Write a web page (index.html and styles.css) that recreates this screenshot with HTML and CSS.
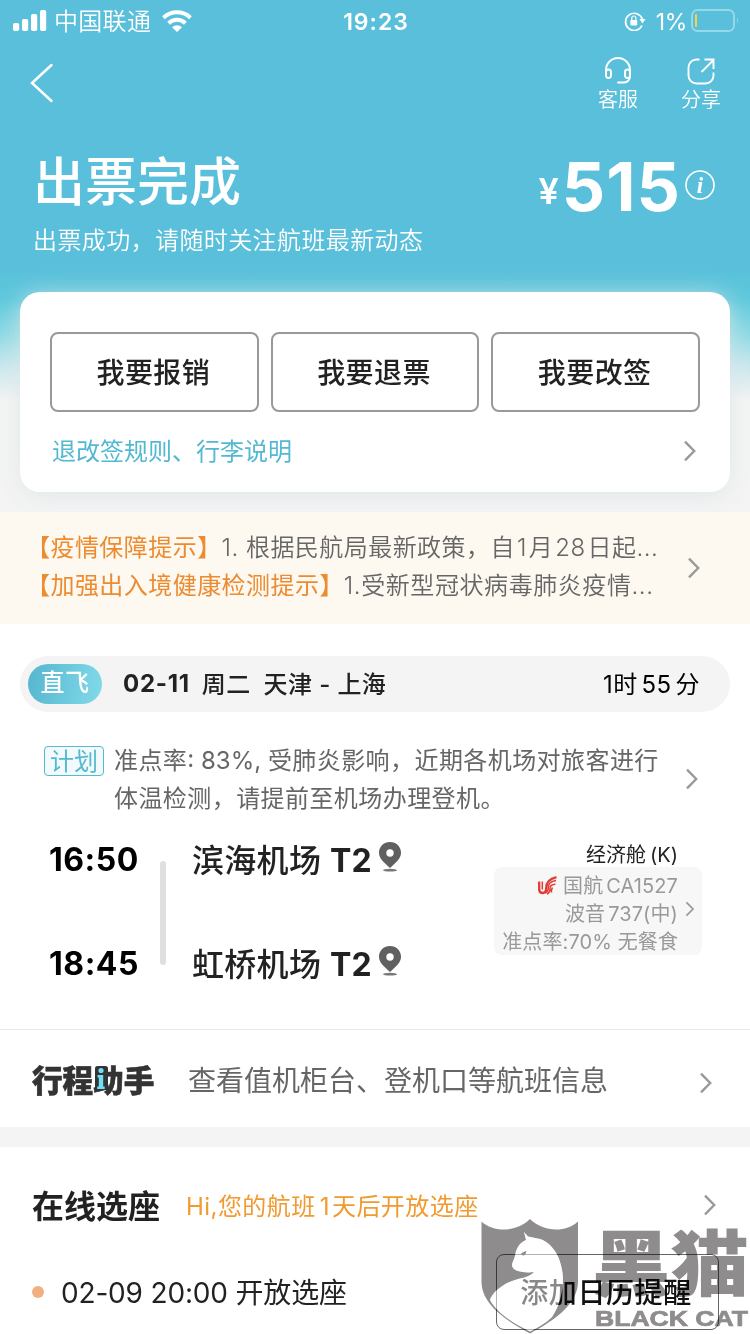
FILE: index.html
```html
<!DOCTYPE html>
<html lang="zh-CN">
<head>
<meta charset="utf-8">
<title>出票完成</title>
<link rel="stylesheet" href="styles.css">
</head>
<body>
<svg class="defs" width="0" height="0">
  <symbol id="chev" viewBox="0 0 14 22"><path d="M2 1.6 11.2 11 2 20.4" fill="none" stroke="#999" stroke-width="2.4"/></symbol>
  <symbol id="pin" viewBox="0 0 24 32"><path d="M12 1C5.700 1 1 5.700 1 11.700c0 6 5 9.300 11 15.300 6-6 11-9.300 11-15.300C23 5.700 18.300 1 12 1z" fill="#606060"/><circle cx="12" cy="12" r="3.700" fill="#fff"/><ellipse cx="12" cy="29.200" rx="7" ry="1.400" fill="#777"/></symbol>
</svg>
<div class="screen">
  <header class="hero">
    <div class="status">
      <div class="status-left">
        <svg width="34" height="22" viewBox="0 0 34 22" fill="#fff"><rect x="0" y="13" width="6.200" height="8" rx="1.800"/><rect x="9" y="9" width="6.200" height="12" rx="1.800"/><rect x="18" y="4" width="6.200" height="17" rx="1.800"/><rect x="27" y="0" width="6.200" height="21" rx="1.800"/></svg>
        <span class="carrier">中国联通</span>
        <svg width="30" height="22" viewBox="0 0 30 22"><path d="M1.500 7.700a19.500 19.500 0 0 1 27 0M6.600 13.200a12 12 0 0 1 16.800 0" fill="none" stroke="#fff" stroke-width="4"/><path d="M10 17.300a7.400 7.400 0 0 1 10 0L15 22z" fill="#fff"/></svg>
      </div>
      <div class="clock">19:23</div>
      <div class="status-right">
        <svg width="22" height="20" viewBox="0 0 22 20"><path d="M18 14.500A8.600 8.600 0 1 1 18.300 8" fill="none" stroke="#fff" stroke-width="1.700"/><path d="M15.500 8h6l-3 4.600z" fill="#fff"/><rect x="6.400" y="9" width="6.800" height="5.400" rx=".8" fill="#fff"/><path d="M7.800 9V7a2 2 0 0 1 4 0v2" fill="none" stroke="#fff" stroke-width="1.200"/></svg>
        <span class="percent">1%</span>
        <svg width="48" height="24" viewBox="0 0 48 24"><rect x="1" y="1" width="42" height="21" rx="5.500" fill="none" stroke="#95d8e8" stroke-width="2"/><rect x="4" y="5" width="2" height="13" rx="1" fill="#f6d34b"/><path d="M46 8.500q2 3 0 6z" fill="#95d8e8"/></svg>
      </div>
    </div>
    <nav class="nav">
      <svg class="back" width="24" height="40" viewBox="0 0 24 40"><path d="M21.500 2 2 20l19.500 18" fill="none" stroke="#fff" stroke-width="2.500" stroke-linecap="round"/></svg>
      <div class="actions">
        <div class="action">
          <svg width="28" height="28" viewBox="0 0 28 28" fill="none" stroke="#fff" stroke-width="1.900" stroke-linecap="round"><path d="M2 17v-4a12 12 0 0 1 24 0v6.500a6 6 0 0 1-6 6h-6"/><rect x="2" y="12.500" width="5" height="8.500" rx="2.500"/><rect x="21" y="12.500" width="5" height="8.500" rx="2.500"/></svg>
          <span>客服</span>
        </div>
        <div class="action">
          <svg width="28" height="28" viewBox="0 0 28 28" fill="none" stroke="#fff" stroke-width="1.900"><path d="M12.500 2.500H9.500a8 8 0 0 0-8 8v8a8 8 0 0 0 8 8h9a8 8 0 0 0 8-8v-3"/><path d="M14.500 15 26 3.500M17.500 2.500h9V12"/></svg>
          <span>分享</span>
        </div>
      </div>
    </nav>
    <div class="headline">
      <h1>出票完成</h1>
      <div class="price"><span class="yen">¥</span><span class="amount">515</span>
        <svg width="30" height="30" viewBox="0 0 30 30"><circle cx="15" cy="15" r="14" fill="none" stroke="#fff" stroke-width="1.600"/><text x="15" y="22.800" text-anchor="middle" class="info-i">i</text></svg>
      </div>
    </div>
    <p class="sub">出票成功，请随时关注航班最新动态</p>
  </header>

  <main>
    <div class="card-area">
      <section class="card">
        <div class="buttons"><button>我要报销</button><button>我要退票</button><button>我要改签</button></div>
        <div class="rules"><span>退改签规则、行李说明</span><svg class="chev"><use href="#chev"/></svg></div>
      </section>
    </div>

    <section class="notice">
      <div>
        <p><b>【疫情保障提示】</b>1. 根据民航局最新政策，自<i>1</i>月<i>28</i>日起...</p>
        <p class="second"><b>【加强出入境健康检测提示】</b>1.受新型冠状病毒肺炎疫情...</p>
      </div>
      <svg class="chev"><use href="#chev"/></svg>
    </section>

    <section class="flight">
      <div class="route"><span class="direct">直飞</span><span class="date">02-11</span><span class="week">周二</span><span class="cities">天津 - 上海</span><span class="duration">1时<i>55</i>分</span></div>
      <div class="plan"><span class="tag">计划</span><p>准点率<i>: 83%, </i>受肺炎影响，近期各机场对旅客进行<br>体温检测，请提前至机场办理登机。</p><svg class="chev"><use href="#chev"/></svg></div>
      <div class="trip">
        <div class="times"><span>16:50</span><span>18:45</span></div>
        <div class="bar"></div>
        <div class="ports">
          <div><span>滨海机场 <b>T2</b></span><svg class="pin"><use href="#pin"/></svg></div>
          <div><span>虹桥机场 <b>T2</b></span><svg class="pin"><use href="#pin"/></svg></div>
        </div>
        <div class="plane">
          <div class="cabin">经济舱<i>(K)</i></div>
          <div class="craft">
            <div class="lines">
              <div><svg width="19" height="19" viewBox="0 0 19 19" fill="none" stroke="#e23b35"><path d="M1.200 5.500v8.300q.3 3.200 3.800 3.200 3.200-.5 3.200-5 0-8.500 10.300-10.800" stroke-width="2.300"/><path d="M4.300 5.500v8" stroke-width="1.500"/><path d="M9 18.200q3.200-1.800 3-5.700 0-4 5.500-4.200M7 17q3.600-1.500 3.300-6 0-5 7.700-6.400M14.500 11.500q-1.500 2-1 5" stroke-width="1.500"/></svg><span>国航<i>CA1527</i></span></div>
              <div><span>波音<i>737(</i>中)</span></div>
              <div><span class="rate">准点率:70% 无餐食</span></div>
            </div>
            <svg class="chev small"><use href="#chev"/></svg>
          </div>
        </div>
      </div>
    </section>

    <section class="helper">
      <div class="logo">行程助手<svg width="13" height="24" viewBox="0 0 13 24"><path d="M0 24V3q0-3 3-3h7q3 0 3 3v21z" fill="#333"/><circle cx="6" cy="4.500" r="2.600" fill="#6fe0f2"/><path d="M2.500 9h5.700v11.500h1.500V23h-7.500v-2.500h1.600v-9H2.500z" fill="#6fe0f2"/></svg></div>
      <span>查看值机柜台、登机口等航班信息</span>
      <svg class="chev"><use href="#chev"/></svg>
    </section>

    <section class="seat">
      <div class="seat-head"><h2>在线选座</h2><span>Hi,您的航班<i>1</i>天后开放选座</span><svg class="chev"><use href="#chev"/></svg></div>
      <div class="seat-row"><span class="dot"></span><span class="open">02-09 20:00 开放选座</span><button class="remind">添加日历提醒</button></div>
    </section>
  </main>

  <svg class="watermark" width="270" height="120" viewBox="480 1214 270 120">
    <g class="ink">
      <path fill-rule="evenodd" d="M481.500 1221.500c13 12 36 10 48.500-2.500 12.500 12.500 35 14.500 48 2.500v60c0 22-22 38-48 52-26-14-48.500-30-48.500-52z M524 1232l4 4.500 12 2.500c9 3 22 14 23 40 0 14-4 28-11 38-6 6-13 10-22 14.500-14-7-32-17-40-31.500 2-7 12-16 25-20 6-2 15-3 19-8-7 1-12 0-16-1-4-1-6-4-6-6 0-3 2-5 3-9 1-7 4-13 11-16z"/>
      <text x="592" y="1290" class="mark" textLength="157" lengthAdjust="spacingAndGlyphs">黑猫</text>
      <text x="595" y="1326" class="latin" textLength="153" lengthAdjust="spacingAndGlyphs">BLACK CAT</text>
    </g>
    <path class="cat" d="M524 1232l4 4.500 12 2.500c9 3 22 14 23 40 0 14-4 28-11 38-6 6-13 10-22 14.500-14-7-32-17-40-31.500 2-7 12-16 25-20 6-2 15-3 19-8-7 1-12 0-16-1-4-1-6-4-6-6 0-3 2-5 3-9 1-7 4-13 11-16z"/>
    <path d="M520.500 1254q3-2.500 6-3-1 4.500-3.500 4.500z" fill="#8e8b8c"/>
  </svg>
</div>
</body>
</html>
```
FILE: styles.css
```css
* { box-sizing: border-box; }
body { margin: 0; background: #fff; font-family: Inter, "Noto Sans CJK SC", sans-serif; color: #222; }
p, h1, h2 { margin: 0; }
i { font-style: normal; }
svg { display: block; flex: none; }
.defs { position: absolute; }
.screen { position: relative; width: 750px; height: 1334px; overflow: hidden; }
.chev { width: 14px; height: 22px; }
.chev.small { width: 10px; height: 16px; }

.hero { height: 400px; background: linear-gradient(#59bfda 0, #59bfda 265px, #5ec9dc 300px, #8ddae5 335px, #c8e8ed 365px, #f4f4f4 400px); color: #fff; }
.status { height: 40px; display: grid; grid-template-columns: 1fr 66px 1fr; align-items: center; padding: 0 11px 0 13px; }
.status-left, .status-right { display: flex; align-items: center; }
.carrier { font-size: 24px; font-weight: 350; letter-spacing: .3px; line-height: 40px; margin: 2px 11px 0 7px; }
.clock { font-size: 23px; font-weight: 600; letter-spacing: 1px; text-align: center; white-space: nowrap; padding-top: 1px; }
.status-right { justify-content: flex-end; }
.percent { font-size: 23px; letter-spacing: -.4px; margin: 1px 4px 0 10px; }
.nav { height: 88px; display: flex; justify-content: space-between; padding: 16px 29px 0 30px; }
.back { margin-top: 7px; }
.actions { display: flex; gap: 43px; margin-top: 1px; }
.action { width: 40px; display: flex; flex-direction: column; align-items: center; font-size: 20px; font-weight: 350; line-height: 30px; }
.headline { display: flex; justify-content: space-between; height: 90px; padding: 12px 35px 0 33px; }
h1 { font-size: 52px; font-weight: 500; line-height: 86px; }
.price { display: flex; align-items: baseline; font-weight: 700; }
.yen { font-size: 36px; font-weight: 600; margin: 0 3px 7px 0; transform: translateY(-7px); }
.amount { font-size: 68px; line-height: 92px; letter-spacing: 1px; }
.price svg { align-self: flex-start; margin: 30px 0 0 4px; }
.info-i { font: italic 700 23px "Liberation Serif", serif; fill: #fff; }
.sub { font-size: 24px; font-weight: 350; letter-spacing: .4px; line-height: 36px; padding: 5px 33px 0; }

.card-area { height: 112px; background: #f4f4f4; }
.card { position: relative; top: -108px; height: 200px; margin: 0 20px; background: #fff; border-radius: 20px; box-shadow: 0 4px 24px rgba(222, 229, 232, .85); padding: 40px 30px 0; }
.buttons { display: grid; grid-template-columns: repeat(3, 1fr); gap: 12px; }
button { font: 500 28px/1 Inter, "Noto Sans CJK SC", sans-serif; letter-spacing: .4px; color: #222; background: none; border: 2px solid #999; border-radius: 8px; height: 80px; padding: 2px 2px 0 0; }
.rules { display: flex; align-items: center; justify-content: space-between; height: 78px; padding: 0 3px 0 2px; font-size: 24px; font-weight: 400; color: #53b9d1; }
.rules span { margin-top: -3px; }

.notice { position: relative; display: flex; align-items: center; justify-content: space-between; height: 112px; background: #fdf8f0; padding: 0 49px 2px 26px; font-size: 24px; font-weight: 350; line-height: 38px; letter-spacing: .45px; color: #666; white-space: nowrap; }
.notice b { font-weight: 400; color: #ed8b30; }
.notice i { margin: 0 2px; }
.notice .chev { margin-top: 2px; }
.notice .second { letter-spacing: .57px; }
.second b { letter-spacing: .45px; }

.flight { height: 406px; padding: 32px 20px 0; border-bottom: 1px solid #eaeaea; }
.route { display: flex; align-items: center; height: 56px; border-radius: 28px; background: #f4f4f4; padding: 0 30px 0 8px; font-size: 24px; font-weight: 500; letter-spacing: .4px; white-space: nowrap; }
.direct { width: 74px; height: 40px; border-radius: 20px; background: linear-gradient(100deg, #54b6cf, #82dae9); color: #fff; line-height: 38px; text-align: center; }
.date { font-weight: 700; margin: -1px 0 0 21px; letter-spacing: .7px; }
.week { margin: -4px 0 0 12px; }
.cities { margin: -4px 0 0 13px; }
.duration { margin: -4px 0 0 auto; color: #000; font-weight: 400; }
.duration i { margin: 0 4px; }
.plan { display: flex; align-items: flex-start; padding: 30px 31px 0 24px; height: 112px; }
.tag { width: 60px; height: 30px; margin-top: 4px; border: 1px solid #54b9d1; border-radius: 4px; background: #f3fafb; color: #54b9d1; font-size: 24px; font-weight: 400; line-height: 29px; text-align: center; }
.plan p { margin-left: 10px; font-size: 24px; font-weight: 400; line-height: 38px; letter-spacing: .43px; color: #666; white-space: nowrap; }
.plan i { letter-spacing: 0; }
.plan .chev { margin: 26px 0 0 auto; }
.trip { display: flex; padding: 12px 28px 0; }
.times { width: 91px; padding: 3px 0 0 1px; font-size: 32px; font-weight: 700; letter-spacing: .5px; color: #000; }
.times span, .ports > div { display: flex; align-items: center; height: 40px; margin: 0 0 64px; white-space: nowrap; }
.bar { width: 6px; height: 104px; margin: 25px 26px 0 21px; border-radius: 3px; background: #dfdfdf; }
.ports { padding-top: 2px; font-size: 32px; font-weight: 500; letter-spacing: .3px; }
.ports b { font-weight: 700; letter-spacing: 0; }
.pin { width: 24px; height: 32px; margin: -2px 0 0 6px; }
.plane { width: 208px; margin-left: auto; }
.cabin { height: 31px; padding: 5px 24px 0 0; font-size: 20px; line-height: 28px; text-align: right; white-space: nowrap; }
.cabin i { margin-left: 4px; }
.craft { display: flex; align-items: center; width: 208px; height: 88px; border-radius: 8px; background: #f7f7f7; color: #999; font-size: 20px; font-weight: 400; letter-spacing: .1px; white-space: nowrap; padding: 6px 7px 0 8px; }
.lines { width: 176px; }
.lines div { display: flex; align-items: center; justify-content: flex-end; gap: 6px; height: 28px; line-height: 28px; }
.lines div svg { margin-top: -1px; }
.lines i { margin-left: 3px; }
.craft .small { margin: -10px 0 0 7px; }

.helper { display: flex; align-items: center; height: 97px; padding: 0 37px 0 32px; white-space: nowrap; color: #666; font-size: 28px; font-weight: 400; }
.helper .chev, .seat-head .chev { margin-left: auto; }
.helper .chev { margin-top: 8px; }
.logo { position: relative; width: 156px; font-size: 30.600px; font-weight: 900; color: #333; -webkit-text-stroke: .6px #333; }
.logo svg { position: absolute; left: 63px; top: 9px; }
.seat { height: 207px; border-top: 20px solid #f4f4f4; padding: 28px 31px 0 32px; }
.seat-head { display: flex; align-items: center; height: 60px; white-space: nowrap; padding-right: 2px; }
h2 { font-size: 32px; font-weight: 700; width: 154px; margin-top: -2px; }
.seat-head span { color: #f19a2f; font-size: 24px; letter-spacing: .45px; margin-top: -1px; }
.seat-head i { margin: 0 2px 0 4px; }
.seat-row { display: flex; align-items: center; height: 76px; margin-top: 19px; font-size: 28px; letter-spacing: -.17px; white-space: nowrap; }
.open { margin-top: -3px; }
.dot { width: 12px; height: 12px; border-radius: 50%; background: #f2b080; margin-right: 17px; }
.remind { width: 223px; height: 76px; margin-left: auto; border: 1px solid #666; border-radius: 8px; color: #111; letter-spacing: .6px; padding: 2px 3px 0 0; }
.watermark { position: absolute; left: 480px; top: 1214px; }
.ink { fill: #8f8c8d; mix-blend-mode: multiply; }
.cat { fill: #fff; opacity: .5; }
.mark { font: 900 72px "Noto Sans CJK SC", sans-serif; }
.latin { font: 700 22px "Liberation Sans", sans-serif; stroke: #8f8c8d; stroke-width: .7px; }
```
